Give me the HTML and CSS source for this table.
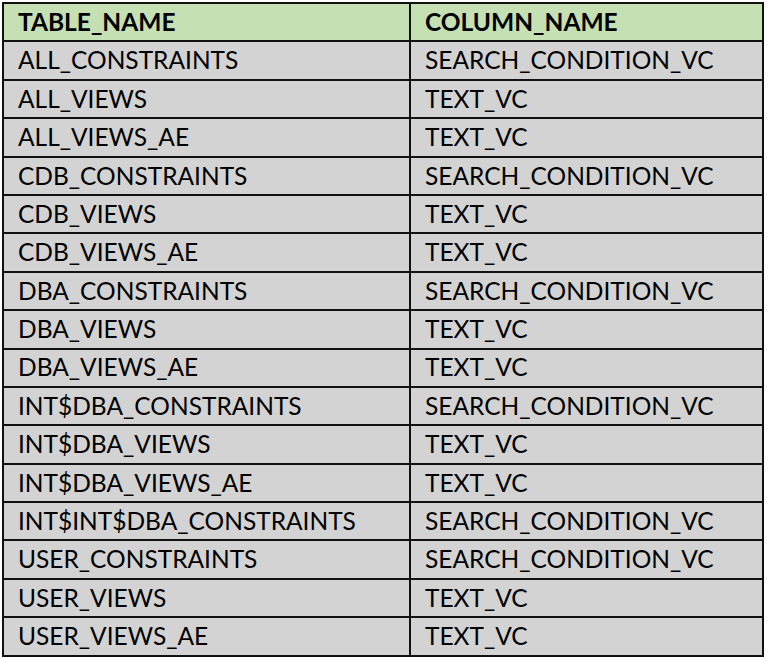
FILE: index.html
```html
<!DOCTYPE html>
<html>
<head>
<meta charset="utf-8">
<link rel="stylesheet" href="styles.css">
</head>
<body>
<table class="grid">
  <thead>
    <tr class="head"><th class="c1">TABLE_NAME</th><th class="c2">COLUMN_NAME</th></tr>
  </thead>
  <tbody>
    <tr><td>ALL_CONSTRAINTS</td><td>SEARCH_CONDITION_VC</td></tr>
    <tr><td>ALL_VIEWS</td><td>TEXT_VC</td></tr>
    <tr><td>ALL_VIEWS_AE</td><td>TEXT_VC</td></tr>
    <tr><td>CDB_CONSTRAINTS</td><td>SEARCH_CONDITION_VC</td></tr>
    <tr><td>CDB_VIEWS</td><td>TEXT_VC</td></tr>
    <tr><td>CDB_VIEWS_AE</td><td>TEXT_VC</td></tr>
    <tr><td>DBA_CONSTRAINTS</td><td>SEARCH_CONDITION_VC</td></tr>
    <tr><td>DBA_VIEWS</td><td>TEXT_VC</td></tr>
    <tr><td>DBA_VIEWS_AE</td><td>TEXT_VC</td></tr>
    <tr><td>INT$DBA_CONSTRAINTS</td><td>SEARCH_CONDITION_VC</td></tr>
    <tr><td>INT$DBA_VIEWS</td><td>TEXT_VC</td></tr>
    <tr><td>INT$DBA_VIEWS_AE</td><td>TEXT_VC</td></tr>
    <tr><td>INT$INT$DBA_CONSTRAINTS</td><td>SEARCH_CONDITION_VC</td></tr>
    <tr><td>USER_CONSTRAINTS</td><td>SEARCH_CONDITION_VC</td></tr>
    <tr><td>USER_VIEWS</td><td>TEXT_VC</td></tr>
    <tr><td>USER_VIEWS_AE</td><td>TEXT_VC</td></tr>
  </tbody>
</table>
</body>
</html>
```

FILE: styles.css
```css
html, body {
  margin: 0;
  padding: 0;
  background: #ffffff;
}
body {
  padding: 2px 0 0 2px;
}
.grid {
  border-collapse: collapse;
  width: 762px;
  table-layout: fixed;
  font-family: Lato, "Open Sans", sans-serif;
  font-size: 24.5px;
  color: #000000;
}
.grid th, .grid td {
  border: 2px solid #111111;
  height: 36.4px;
  padding: 0 0 0 14px;
  text-align: left;
  vertical-align: middle;
  white-space: nowrap;
  line-height: 1;
}
.grid .c1 { width: 391px; }
.grid .head th {
  background: #c5e0b3;
  font-weight: 700;
}
.grid td {
  background: #d3d3d3;
}
```
